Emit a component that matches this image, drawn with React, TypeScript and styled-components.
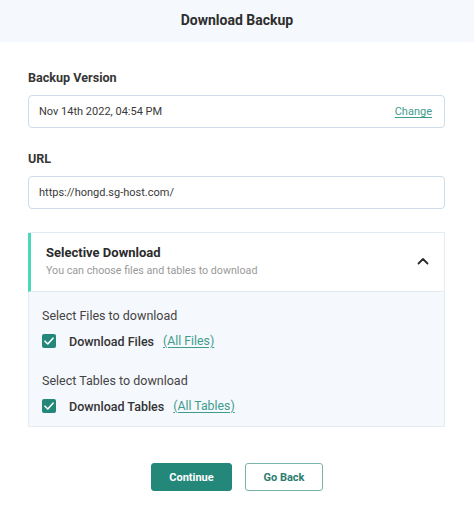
import React from "react"
import styled, { createGlobalStyle } from "styled-components"

const GlobalStyle = createGlobalStyle`
    html, body {
        margin: 0;
        padding: 0;
        background: #fff;
        font-family: Roboto, "Liberation Sans", sans-serif;
        color: #363636;
    }
`

function CheckIcon() {
    return (
        <svg width="10" height="8" viewBox="0 0 10 8" fill="none">
            <path d="M1 4.2 L3.8 7 L9 1.2" stroke="#fff" strokeWidth="1.6" strokeLinecap="round" strokeLinejoin="round" />
        </svg>
    )
}

function ChevronUp() {
    return (
        <svg width="12" height="8" viewBox="0 0 12 8" fill="none">
            <path d="M1.5 6.5 L6 2 L10.5 6.5" stroke="#2b2b2b" strokeWidth="1.8" strokeLinecap="round" strokeLinejoin="round" />
        </svg>
    )
}

export default function App() {
    return (
        <>
            <GlobalStyle />
            <Page>
                <Header>Download Backup</Header>
                <Content>
                    <Field>
                        <Label>Backup Version</Label>
                        <InputBox>
                            <InputText>Nov 14th 2022, 04:54 PM</InputText>
                            <Link small>Change</Link>
                        </InputBox>
                    </Field>
                    <Field>
                        <Label>URL</Label>
                        <InputBox>
                            <InputText>https://hongd.sg-host.com/</InputText>
                        </InputBox>
                    </Field>
                    <Panel>
                        <PanelHead>
                            <div>
                                <PanelTitle>Selective Download</PanelTitle>
                                <PanelSub>You can choose files and tables to download</PanelSub>
                            </div>
                            <ChevronUp />
                        </PanelHead>
                        <PanelBody>
                            <Group>
                                <GroupTitle>Select Files to download</GroupTitle>
                                <CheckRow>
                                    <Box><CheckIcon /></Box>
                                    <CheckLabel>Download Files</CheckLabel>
                                    <Link>(All Files)</Link>
                                </CheckRow>
                            </Group>
                            <Group>
                                <GroupTitle>Select Tables to download</GroupTitle>
                                <CheckRow>
                                    <Box><CheckIcon /></Box>
                                    <CheckLabel>Download Tables</CheckLabel>
                                    <Link>(All Tables)</Link>
                                </CheckRow>
                            </Group>
                        </PanelBody>
                    </Panel>
                    <Actions>
                        <Button primary>Continue</Button>
                        <Button>Go Back</Button>
                    </Actions>
                </Content>
            </Page>
        </>
    )
}

const Page = styled.div`
    width: 474px;
    min-height: 505px;
    display: flex;
    flex-direction: column;
`

const Header = styled.div`
    height: 42px;
    display: flex;
    align-items: center;
    justify-content: center;
    background: #f5f8fc;
    font-size: 14px;
    font-weight: 700;
    color: #2e2e2e;
    padding-bottom: 2px;
    box-sizing: border-box;
`

const Content = styled.div`
    padding: 28px 29px 0 28px;
    display: flex;
    flex-direction: column;
`

const Field = styled.div`
    display: flex;
    flex-direction: column;
    margin-bottom: 23px;
`

const Label = styled.div`
    font-size: 12.6px;
    font-weight: 700;
    color: #363636;
    line-height: 16px;
    margin-bottom: 9px;
`

const InputBox = styled.div`
    height: 33px;
    box-sizing: border-box;
    border: 1px solid #cfdbe8;
    border-radius: 4px;
    padding: 0 12px 0 10px;
    display: flex;
    align-items: center;
    justify-content: space-between;
`

const InputText = styled.span`
    font-size: 11px;
    color: #3a3a3a;
`

const Link = styled.span<{ small?: boolean }>`
    font-size: ${p => (p.small ? "11px" : "12.3px")};
    color: #3f9c8c;
    text-decoration: underline;
    text-underline-offset: 2px;
`

const Panel = styled.div`
    border: 1px solid #e4ebf2;
    display: flex;
    flex-direction: column;
`

const PanelHead = styled.div`
    height: 59px;
    box-sizing: border-box;
    border-left: 3px solid #4bd8b8;
    border-bottom: 1px solid #e4ebf2;
    margin-left: -1px;
    padding: 0 15px 3px 15px;
    display: flex;
    align-items: center;
    justify-content: space-between;
    background: #fff;
`

const PanelTitle = styled.div`
    font-size: 13px;
    font-weight: 700;
    color: #2b2b2b;
    line-height: 16px;
`

const PanelSub = styled.div`
    font-size: 10.7px;
    color: #9a9a9a;
    margin-top: 3px;
`

const PanelBody = styled.div`
    background: #f5f8fc;
    padding: 16px 13px 11px;
    display: flex;
    flex-direction: column;
    gap: 23px;
`

const Group = styled.div`
    display: flex;
    flex-direction: column;
    gap: 8px;
`

const GroupTitle = styled.div`
    font-size: 12.5px;
    color: #444;
    line-height: 16px;
`

const CheckRow = styled.div`
    display: flex;
    align-items: center;
    height: 18px;
`

const Box = styled.div`
    width: 14px;
    height: 14px;
    border-radius: 2px;
    background: #23877a;
    display: flex;
    align-items: center;
    justify-content: center;
    margin-right: 13px;
`

const CheckLabel = styled.span`
    font-size: 12.5px;
    font-weight: 500;
    color: #333;
    margin-right: 9px;
`

const Actions = styled.div`
    display: flex;
    justify-content: center;
    gap: 13px;
    margin-top: 36px;
    margin-left: 1px;
`

const Button = styled.button<{ primary?: boolean }>`
    height: 28px;
    box-sizing: border-box;
    padding: 0;
    width: ${p => (p.primary ? "81px" : "78px")};
    border-radius: 3px;
    font-family: Roboto, "Liberation Sans", sans-serif;
    font-size: 11px;
    font-weight: 700;
    border: 1px solid ${p => (p.primary ? "#23877a" : "#7bb3aa")};
    background: ${p => (p.primary ? "#23877a" : "#fff")};
    color: ${p => (p.primary ? "#fff" : "#2c7c70")};
`
